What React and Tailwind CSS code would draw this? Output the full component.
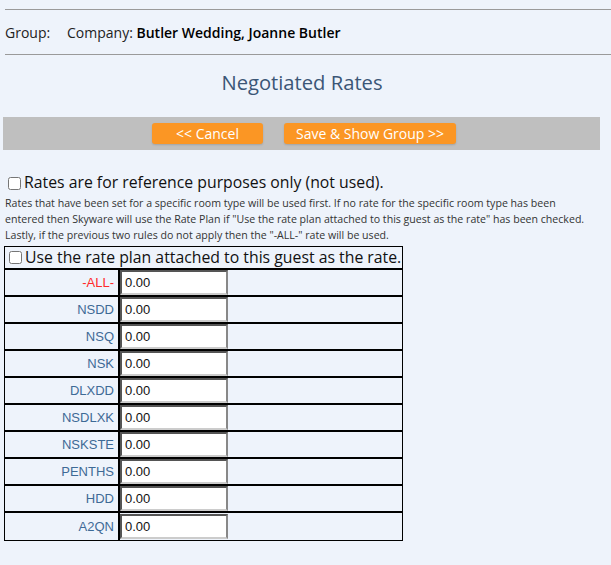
import React from "react";

const rows = ["-ALL-", "NSDD", "NSQ", "NSK", "DLXDD", "NSDLXK", "NSKSTE", "PENTHS", "HDD", "A2QN"];

export default function App() {
  const ff = { fontFamily: '"Open Sans", "Liberation Sans", sans-serif' };
  return (
    <div className="w-[611px] h-[565px] bg-[#eef3fb] overflow-hidden text-[#111]" style={ff}>
      <div className="pt-[9px]">
        <div className="ml-[5px] border-t border-[#9a9a9a]" />
        <div className="h-[44px] flex items-center px-[5px] text-[14px] text-[#222]">
          <span className="w-[62px]">Group:</span>
          <span>Company:&nbsp;</span>
          <span className="font-semibold text-black">Butler Wedding, Joanne Butler</span>
        </div>
        <div className="ml-[5px] border-t border-[#9a9a9a]" />
        <div className="h-[55px] flex items-center justify-center pr-[7px] text-[20.2px] text-[#3b5676]">
          Negotiated Rates
        </div>
        <div className="mt-[7px] ml-[3px] w-[597px] h-[33px] bg-[#bfbfbf] flex items-center">
          <button className="ml-[149px] w-[111px] h-[21px] rounded-[3px] bg-[#fb9624] text-white text-[14px] leading-none shadow-[0_1px_2px_rgba(0,0,0,0.15)]">
            &lt;&lt; Cancel
          </button>
          <button className="ml-[21px] w-[172px] h-[21px] rounded-[3px] bg-[#fb9624] text-white text-[14px] leading-none shadow-[0_1px_2px_rgba(0,0,0,0.15)]">
            Save &amp; Show Group &gt;&gt;
          </button>
        </div>
        <div className="mt-[25px] h-[16px] flex items-center pl-[8px]">
          <input type="checkbox" className="w-[13px] h-[13px] m-0" />
          <span className="ml-[3px] text-[15.8px] leading-none text-[#111]">Rates are for reference purposes only (not used).</span>
        </div>
        <div className="mt-[4px] pl-[5px] text-[10.6px] leading-[16px] text-[#333] whitespace-nowrap">
          Rates that have been set for a specific room type will be used first. If no rate for the specific room type has been
          <br />
          entered then Skyware will use the Rate Plan if "Use the rate plan attached to this guest as the rate" has been checked.
          <br />
          Lastly, if the previous two rules do not apply then the "-ALL-" rate will be used.
        </div>
        <div className="mt-[3px] ml-[4px] w-[399px] border border-black">
          <div className="h-[23px] flex items-center pl-[4px] border-b-2 border-black">
            <input type="checkbox" className="w-[13px] h-[13px] m-0" />
            <span className="ml-[3px] text-[15.8px] leading-none text-[#111] whitespace-nowrap">Use the rate plan attached to this guest as the rate.</span>
          </div>
          {rows.map((r, i) => (
            <div key={r} className={"h-[27px] flex " + (i < rows.length - 1 ? "border-b-2 border-black" : "")}>
              <div
                className={"w-[115px] flex items-center justify-end pr-[4px] border-r-2 border-black text-[13px] " + (i === 0 ? "text-[#ff2a2a]" : "text-[#3e6a96]")}
                style={{ fontFamily: '"Liberation Sans", Arial, sans-serif' }}
              >
                {r}
              </div>
              <div className="flex items-center">
                <input
                  type="text"
                  defaultValue="0.00"
                  className="w-[108px] h-[25px] bg-white border-2 border-t-[#555] border-l-[#555] border-r-[#888] border-b-[#ccc] px-[3px] text-[13px] text-[#111] outline-none"
                  style={{ fontFamily: '"Liberation Sans", Arial, sans-serif' }}
                />
              </div>
            </div>
          ))}
        </div>
      </div>
    </div>
  );
}
